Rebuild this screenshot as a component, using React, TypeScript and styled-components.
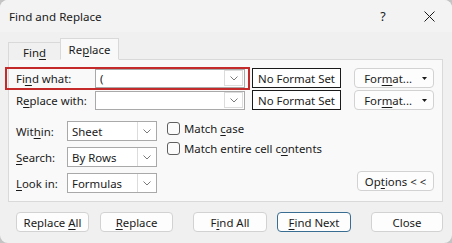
import React from 'react'
import styled, { createGlobalStyle } from 'styled-components'

const GlobalStyle = createGlobalStyle`
    html, body {
        margin: 0;
        padding: 0;
        background: #c4c4c4;
    }
    body {
        font-family: 'Noto Sans', 'Open Sans', sans-serif;
        font-size: 11.4px;
        color: #1a1a1a;
    }
`

const Window = styled.div`
    width: 452px;
    height: 243px;
    box-sizing: border-box;
    background: #f0f0f0;
    border-radius: 8px;
    overflow: hidden;
    display: flex;
    flex-direction: column;
`

const TitleBar = styled.div`
    height: 32px;
    flex-shrink: 0;
    display: flex;
    align-items: center;
    padding-left: 9px;
    background: #f3f3f3;
`

const TitleText = styled.div`
    flex: 1;
    font-size: 11.6px;
`

const CaptionButton = styled.div`
    width: 46px;
    height: 32px;
    display: flex;
    align-items: center;
    justify-content: center;
    font-size: 12.5px;
`

const Body = styled.div`
    padding: 7px 9px 0 8px;
    display: flex;
    flex-direction: column;
`

const TabStrip = styled.div`
    display: flex;
    align-items: flex-end;
    height: 21px;
    margin-bottom: -1px;
    position: relative;
    z-index: 1;
`

const Tab = styled.div<{ $active?: boolean; $width: number }>`
    box-sizing: border-box;
    width: ${({ $width }) => $width}px;
    height: ${({ $active }) => ($active ? 22 : 18)}px;
    border: 1px solid #d9d9d9;
    border-bottom: ${({ $active }) => ($active ? '1px solid #f9f9f9' : 'none')};
    border-right: ${({ $active }) => ($active ? '1px solid #d9d9d9' : 'none')};
    background: ${({ $active }) => ($active ? '#f9f9f9' : '#f0f0f0')};
    display: flex;
    align-items: center;
    justify-content: center;
    padding-top: ${({ $active }) => ($active ? 0 : 1)}px;
`

const Panel = styled.div`
    box-sizing: border-box;
    height: 143px;
    border: 1px solid #d9d9d9;
    background: #f9f9f9;
    padding: 8px 8px 0 7px;
    display: flex;
    flex-direction: column;
`

const FieldRows = styled.div`
    display: flex;
    flex-direction: column;
    gap: 2px;
`

const FieldRow = styled.div`
    position: relative;
    display: flex;
    align-items: center;
    height: 20px;
`

// red annotation drawn over the "Find what" row
const Highlight = styled.div`
    position: absolute;
    left: -11px;
    top: -1px;
    width: 245px;
    height: 23px;
    box-sizing: border-box;
    border: 2px solid #c42a2a;
    pointer-events: none;
`

const Label = styled.div<{ $width: number }>`
    width: ${({ $width }) => $width}px;
    flex-shrink: 0;
    white-space: nowrap;
`

const Combo = styled.div<{ $width: number; $height: number }>`
    box-sizing: border-box;
    width: ${({ $width }) => $width}px;
    height: ${({ $height }) => $height}px;
    border: 1px solid #a9a9a9;
    background: #ffffff;
    display: flex;
    align-items: center;
    padding-left: 4px;
`

const ComboText = styled.div`
    flex: 1;
    white-space: nowrap;
`

const ComboArrow = styled.div<{ $boxed?: boolean }>`
    box-sizing: border-box;
    width: 19px;
    height: 100%;
    display: flex;
    align-items: center;
    justify-content: center;
    border-left: 1px solid #dcdcdc;
    ${({ $boxed }) => $boxed && 'height: 16px; margin-right: 1px; border: 1px solid #dcdcdc;'}
`

const NoFormat = styled.div`
    box-sizing: border-box;
    width: 89px;
    height: 20px;
    margin-left: 7px;
    border: 1px solid #1a1a1a;
    background: #ffffff;
    display: flex;
    align-items: center;
    justify-content: center;
`

const Button = styled.div<{ $width: number; $focused?: boolean }>`
    box-sizing: border-box;
    width: ${({ $width }) => $width}px;
    height: 20px;
    flex-shrink: 0;
    border: 1px solid ${({ $focused }) => ($focused ? '#3a6d92' : '#d2d2d2')};
    border-radius: 4px;
    background: #fdfdfd;
    display: flex;
    align-items: center;
    justify-content: center;
    white-space: nowrap;
`

const FormatButton = styled(Button)`
    margin-left: 13px;
    justify-content: flex-end;
    padding-right: 6px;
    gap: 10px;
`

const OptionsArea = styled.div`
    display: flex;
    margin-top: 11px;
`

const SelectGrid = styled.div`
    display: grid;
    grid-template-columns: 51px 90px;
    grid-auto-rows: 20px;
    row-gap: 6px;
    align-items: center;
`

const CheckColumn = styled.div`
    display: flex;
    flex-direction: column;
    gap: 7px;
    margin-left: 10px;
    padding-top: 1px;
`

const CheckRow = styled.div`
    display: flex;
    align-items: center;
    height: 13px;
    gap: 4px;
`

const CheckBox = styled.div`
    box-sizing: border-box;
    width: 13px;
    height: 13px;
    border: 1px solid #5f5f5f;
    border-radius: 3px;
    background: #fbfbfb;
`

const OptionsButton = styled(Button)`
    margin-left: auto;
    align-self: flex-end;
    margin-bottom: 2px;
`

const ButtonRow = styled.div`
    display: flex;
    margin-top: 10px;
    padding-left: 8px;
`

const Spaced = styled.div<{ $gap: number }>`
    margin-left: ${({ $gap }) => $gap}px;
`

const Key = styled.span`
    text-decoration: underline;
    text-underline-offset: 2px;
    text-decoration-thickness: 1px;
`

function Chevron() {
    return (
        <svg width="8" height="5" viewBox="0 0 8 5">
            <path d="M0.5 0.5 L4 4 L7.5 0.5" fill="none" stroke="#7a7a7a" strokeWidth="1" />
        </svg>
    )
}

function CloseGlyph() {
    return (
        <svg width="11" height="11" viewBox="0 0 11 11">
            <path d="M0.5 0.5 L10.5 10.5 M10.5 0.5 L0.5 10.5" stroke="#1a1a1a" strokeWidth="1" />
        </svg>
    )
}

function Caret() {
    return (
        <svg width="5" height="3" viewBox="0 0 5 3">
            <path d="M0 0 H5 L2.5 3 Z" fill="#1a1a1a" />
        </svg>
    )
}

export default function App() {
    return (
        <>
            <GlobalStyle />
            <Window>
                <TitleBar>
                    <TitleText>Find and Replace</TitleText>
                    <CaptionButton>?</CaptionButton>
                    <CaptionButton>
                        <CloseGlyph />
                    </CaptionButton>
                </TitleBar>
                <Body>
                    <TabStrip>
                        <Tab $width={52}>
                            <span>
                                Fin<Key>d</Key>
                            </span>
                        </Tab>
                        <Tab $active $width={59}>
                            <span>
                                Re<Key>p</Key>lace
                            </span>
                        </Tab>
                    </TabStrip>
                    <Panel>
                        <FieldRows>
                            <FieldRow>
                                <Highlight />
                                <Label $width={79}>
                                    Fi<Key>n</Key>d what:
                                </Label>
                                <Combo $width={150} $height={19}>
                                    <ComboText>(</ComboText>
                                    <ComboArrow $boxed>
                                        <Chevron />
                                    </ComboArrow>
                                </Combo>
                                <NoFormat>No Format Set</NoFormat>
                                <FormatButton $width={80}>
                                    <span>
                                        For<Key>m</Key>at...
                                    </span>
                                    <Caret />
                                </FormatButton>
                            </FieldRow>
                            <FieldRow>
                                <Label $width={79}>
                                    R<Key>e</Key>place with:
                                </Label>
                                <Combo $width={150} $height={19}>
                                    <ComboText />
                                    <ComboArrow $boxed>
                                        <Chevron />
                                    </ComboArrow>
                                </Combo>
                                <NoFormat>No Format Set</NoFormat>
                                <FormatButton $width={80}>
                                    <span>
                                        For<Key>m</Key>at...
                                    </span>
                                    <Caret />
                                </FormatButton>
                            </FieldRow>
                        </FieldRows>
                        <OptionsArea>
                            <SelectGrid>
                                <Label $width={51}>
                                    Wit<Key>h</Key>in:
                                </Label>
                                <Combo $width={90} $height={20}>
                                    <ComboText>Sheet</ComboText>
                                    <ComboArrow>
                                        <Chevron />
                                    </ComboArrow>
                                </Combo>
                                <Label $width={51}>
                                    <Key>S</Key>earch:
                                </Label>
                                <Combo $width={90} $height={20}>
                                    <ComboText>By Rows</ComboText>
                                    <ComboArrow>
                                        <Chevron />
                                    </ComboArrow>
                                </Combo>
                                <Label $width={51}>
                                    <Key>L</Key>ook in:
                                </Label>
                                <Combo $width={90} $height={20}>
                                    <ComboText>Formulas</ComboText>
                                    <ComboArrow>
                                        <Chevron />
                                    </ComboArrow>
                                </Combo>
                            </SelectGrid>
                            <CheckColumn>
                                <CheckRow>
                                    <CheckBox />
                                    <span>
                                        Match <Key>c</Key>ase
                                    </span>
                                </CheckRow>
                                <CheckRow>
                                    <CheckBox />
                                    <span>
                                        Match entire cell c<Key>o</Key>ntents
                                    </span>
                                </CheckRow>
                            </CheckColumn>
                            <OptionsButton $width={77}>
                                <span>
                                    Op<Key>t</Key>ions &lt; &lt;
                                </span>
                            </OptionsButton>
                        </OptionsArea>
                    </Panel>
                    <ButtonRow>
                        <Button $width={73}>
                            <span>
                                Replace <Key>A</Key>ll
                            </span>
                        </Button>
                        <Spaced $gap={11}>
                            <Button $width={73}>
                                <span>
                                    <Key>R</Key>eplace
                                </span>
                            </Button>
                        </Spaced>
                        <Spaced $gap={20}>
                            <Button $width={74}>
                                <span>
                                    F<Key>i</Key>nd All
                                </span>
                            </Button>
                        </Spaced>
                        <Spaced $gap={10}>
                            <Button $width={74} $focused>
                                <span>
                                    <Key>F</Key>ind Next
                                </span>
                            </Button>
                        </Spaced>
                        <Spaced $gap={20}>
                            <Button $width={72}>Close</Button>
                        </Spaced>
                    </ButtonRow>
                </Body>
            </Window>
        </>
    )
}
